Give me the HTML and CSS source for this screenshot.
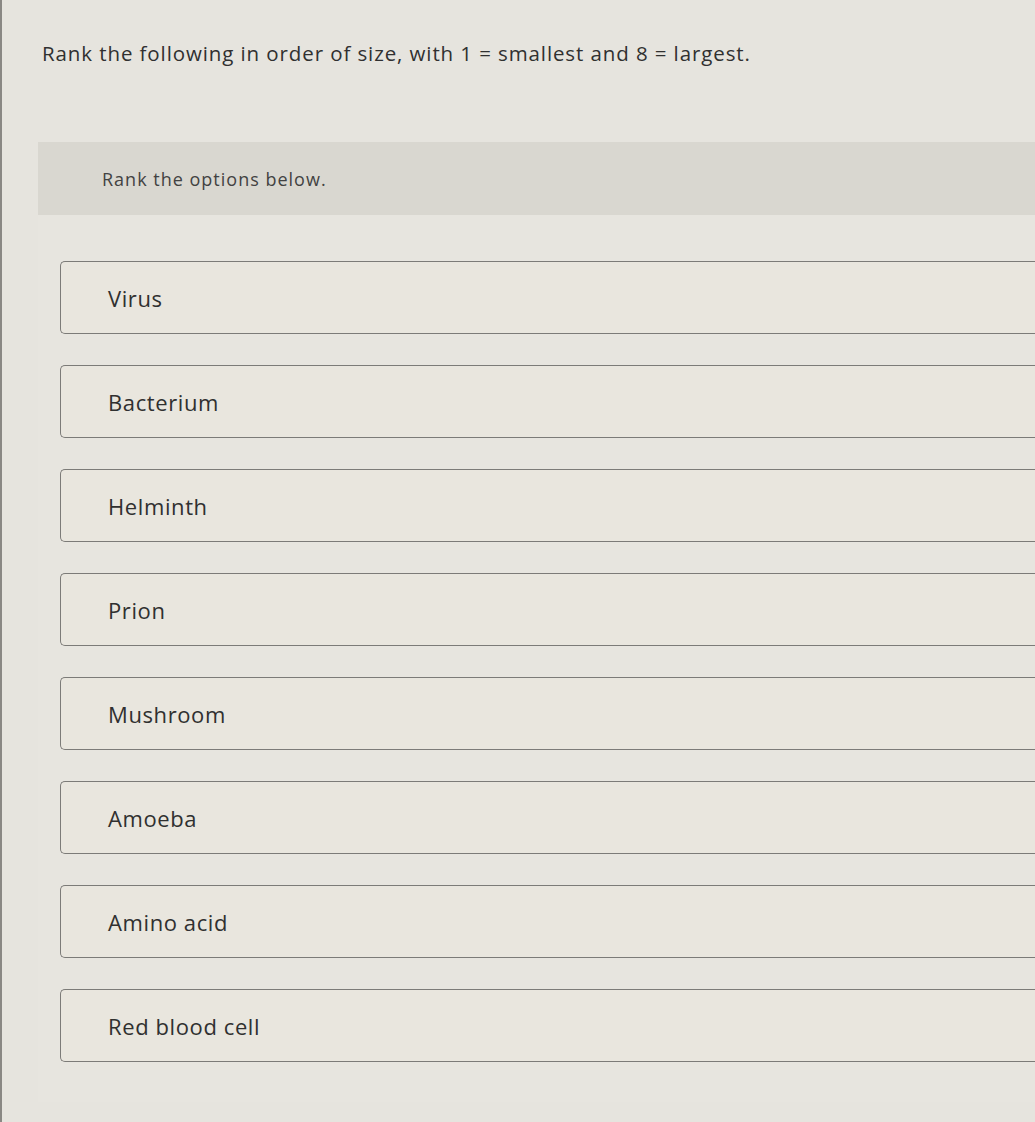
FILE: index.html
```html
<!DOCTYPE html>
<html lang="en">
<head>
<meta charset="utf-8">
<title>Rank by size</title>
<link rel="stylesheet" href="styles.css">
</head>
<body>
<main class="page">
  <h1 class="prompt">Rank the following in order of size, with 1 = smallest and 8 = largest.</h1>
  <section class="panel">
    <div class="panel-head">Rank the options below.</div>
    <ul class="options">
      <li class="option">Virus</li>
      <li class="option">Bacterium</li>
      <li class="option">Helminth</li>
      <li class="option">Prion</li>
      <li class="option">Mushroom</li>
      <li class="option">Amoeba</li>
      <li class="option">Amino acid</li>
      <li class="option">Red blood cell</li>
    </ul>
  </section>
</main>
</body>
</html>
```

FILE: styles.css
```css
html, body {
  margin: 0;
  padding: 0;
  height: 100%;
  overflow: hidden;
}

body {
  background: #e6e4de;
  font-family: "Open Sans", "Lato", sans-serif;
  color: #303030;
  border-left: 2px solid #8a8884;
}

.page {
  padding: 36px 0 0 40px;
  height: 100%;
  box-sizing: border-box;
}

.prompt {
  margin: 0 0 72px 0;
  font-size: 20.5px;
  font-weight: 400;
  line-height: 34px;
  color: #303030;
  letter-spacing: 0.9px;
}

.panel {
  margin-left: -4px;
  margin-right: -40px;
  background: #e7e5df;
  padding-bottom: 40px;
}

.panel-head {
  background: #d9d7d0;
  height: 73px;
  display: flex;
  align-items: center;
  padding-left: 64px;
  font-size: 18px;
  letter-spacing: 1px;
  color: #424242;
}

.options {
  list-style: none;
  margin: 0;
  padding: 46px 0 0 22px;
  display: flex;
  flex-direction: column;
  gap: 31px;
}

.option {
  height: 73px;
  box-sizing: border-box;
  border: 1.5px solid #7c7b78;
  border-right: none;
  border-radius: 5px 0 0 5px;
  background: #e9e6de;
  display: flex;
  align-items: center;
  padding-left: 47px;
  font-size: 22px;
  letter-spacing: 0.6px;
  color: #303030;
}
```
